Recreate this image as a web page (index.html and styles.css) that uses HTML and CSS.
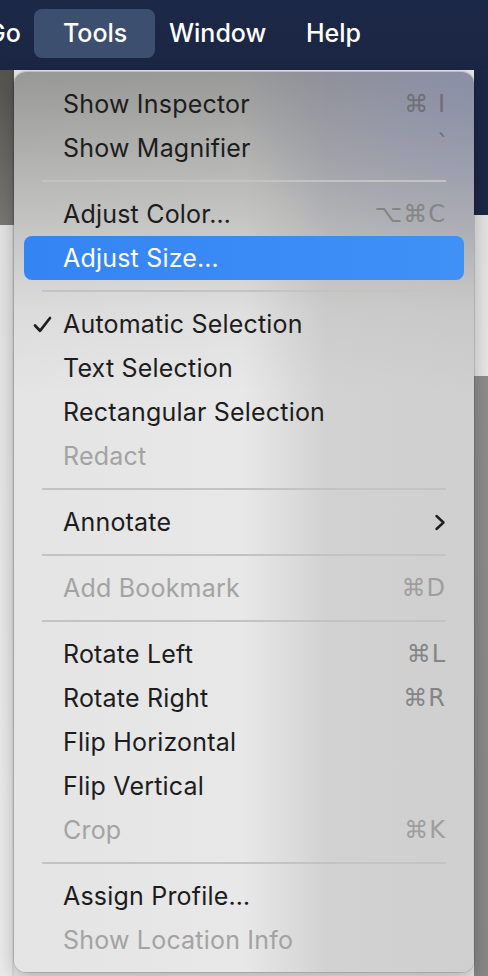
FILE: index.html
```html
<!DOCTYPE html>
<html>
<head>
<meta charset="utf-8">
<link rel="stylesheet" href="styles.css">
</head>
<body>
<div class="screen">
  <header class="menubar">
    <span class="mb-item mb-cut">Go</span>
    <span class="mb-item mb-active">Tools</span>
    <span class="mb-item mb-window">Window</span>
    <span class="mb-item mb-help">Help</span>
  </header>
  <div class="desk">
    <div class="strip strip-left"></div>
    <div class="gap"></div>
    <div class="strip strip-right"></div>
  </div>

  <nav class="menu">
    <div class="row"><span class="check"></span><span class="label">Show Inspector</span><span class="key">⌘ I</span></div>
    <div class="row"><span class="check"></span><span class="label">Show Magnifier</span><span class="key key-tick">`</span></div>
    <div class="sep"></div>
    <div class="row"><span class="check"></span><span class="label">Adjust Color…</span><span class="key key-light">⌥⌘C</span></div>
    <div class="row active"><span class="check"></span><span class="label">Adjust Size…</span><span class="key"></span></div>
    <div class="sep"></div>
    <div class="row"><span class="check"><svg width="19" height="17" viewBox="0 0 19 17"><path d="M2 9.5 L7 14.8 L17 2" fill="none" stroke="#1e1e1e" stroke-width="2.7" stroke-linecap="round" stroke-linejoin="round"/></svg></span><span class="label">Automatic Selection</span><span class="key"></span></div>
    <div class="row"><span class="check"></span><span class="label">Text Selection</span><span class="key"></span></div>
    <div class="row"><span class="check"></span><span class="label">Rectangular Selection</span><span class="key"></span></div>
    <div class="row disabled"><span class="check"></span><span class="label">Redact</span><span class="key"></span></div>
    <div class="sep"></div>
    <div class="row"><span class="check"></span><span class="label">Annotate</span><span class="key"><svg width="12" height="17" viewBox="0 0 12 17"><path d="M2.5 2 L9.5 8.5 L2.5 15" fill="none" stroke="#1e1e1e" stroke-width="2.4" stroke-linecap="round" stroke-linejoin="round"/></svg></span></div>
    <div class="sep"></div>
    <div class="row disabled"><span class="check"></span><span class="label">Add Bookmark</span><span class="key">⌘D</span></div>
    <div class="sep"></div>
    <div class="row"><span class="check"></span><span class="label">Rotate Left</span><span class="key key-light">⌘L</span></div>
    <div class="row"><span class="check"></span><span class="label">Rotate Right</span><span class="key key-light">⌘R</span></div>
    <div class="row"><span class="check"></span><span class="label">Flip Horizontal</span><span class="key"></span></div>
    <div class="row"><span class="check"></span><span class="label">Flip Vertical</span><span class="key"></span></div>
    <div class="row disabled"><span class="check"></span><span class="label">Crop</span><span class="key">⌘K</span></div>
    <div class="sep"></div>
    <div class="row"><span class="check"></span><span class="label">Assign Profile…</span><span class="key"></span></div>
    <div class="row disabled"><span class="check"></span><span class="label">Show Location Info</span><span class="key"></span></div>
  </nav>
</div>
</body>
</html>
```

FILE: styles.css
```css
* { box-sizing: border-box; }
html, body { margin: 0; padding: 0; }
body {
  width: 488px;
  height: 976px;
  overflow: hidden;
  font-family: Inter, "Noto Sans", "DejaVu Sans", sans-serif;
}
.screen {
  position: relative;
  width: 488px;
  height: 976px;
  display: flex;
  flex-direction: column;
}
.menubar {
  height: 70px;
  flex: none;
  background: linear-gradient(to bottom, #1c2847, #1a2643);
  display: flex;
  align-items: center;
  color: #ffffff;
  font-size: 25px;
  font-weight: 500;
  white-space: nowrap;
}
.mb-item {
  display: flex;
  align-items: center;
  height: 49px;
  border-radius: 8px;
  margin-top: -4px;
}
.mb-cut {
  margin-left: -13px;
  width: 47px;
}
.mb-active {
  background: #3c4f6e;
  width: 121px;
  padding-left: 29px;
}
.mb-window { margin-left: 14px; width: 137px; }
.desk {
  flex: 1;
  display: flex;
}
.strip { width: 14px; flex: none; }
.strip-left {
  background: linear-gradient(to bottom, #55534e 0, #7a7873 155px, #e4e4e4 155px, #ececec 100%);
  box-shadow: inset -2px 0 0 rgba(0,0,0,0.06);
}
.strip-right {
  background: linear-gradient(to bottom, #1b2846 0, #1b2846 145px, #e4e4e4 145px, #e8e8e8 306px, #8d8d8d 306px, #888888 100%);
}
.gap { flex: 1; background: #e8e8e8; }

.menu {
  position: absolute;
  left: 14px;
  top: 72px;
  width: 460px;
  height: 900px;
  border-radius: 12px;
  padding: 10px 10px;
  background:
    radial-gradient(ellipse 240px 220px at 100% 0%, rgba(135, 142, 185, 0.6), rgba(135, 142, 185, 0) 100%),
    linear-gradient(to bottom, rgba(105, 105, 102, 0.62) 0, rgba(110, 110, 108, 0.35) 120px, rgba(120, 120, 118, 0.08) 240px, rgba(120, 120, 118, 0) 320px),
    linear-gradient(to right, #e4e4e4 0%, #e8e8e8 50%, #d2d2d2 68%, #cfcfcf 100%);
  box-shadow: 0 0 0 1px rgba(0,0,0,0.12), 0 6px 20px rgba(0,0,0,0.25);
  display: flex;
  flex-direction: column;
}
.row {
  height: 44px;
  display: flex;
  align-items: center;
  border-radius: 8px;
  color: #1d1d1d;
  font-size: 25px;
  letter-spacing: 0.2px;
}
.check {
  width: 39px;
  flex: none;
  display: flex;
  justify-content: flex-end;
  padding-right: 11px;
}
.check svg { display: block; margin-top: 1px; }
.label { flex: 1; white-space: nowrap; }
.key {
  flex: none;
  width: 120px;
  padding-right: 18px;
  color: #6f6f75;
  font-family: "DejaVu Sans", Inter, sans-serif;
  font-size: 24px;
  letter-spacing: 1px;
  display: flex;
  justify-content: flex-end;
  align-items: center;
  white-space: pre;
}
.key-light { color: #858585; }
.key-tick { align-self: flex-start; padding-top: 4px; padding-right: 14px; }
.row.disabled { color: #a3a3a3; }
.row.disabled .key { color: #9e9e9e; }
.row.active {
  background: linear-gradient(to right, #3484f4, #3f91f7);
  color: #ffffff;
}
.sep {
  height: 22px;
  flex: none;
  display: flex;
  align-items: center;
  padding: 0 18px 0 18px;
}
.sep::before {
  content: "";
  display: block;
  width: 100%;
  height: 2px;
  background: #c3c3c3;
}
.sep:first-of-type::before { background: #a0a0a0; }
```
